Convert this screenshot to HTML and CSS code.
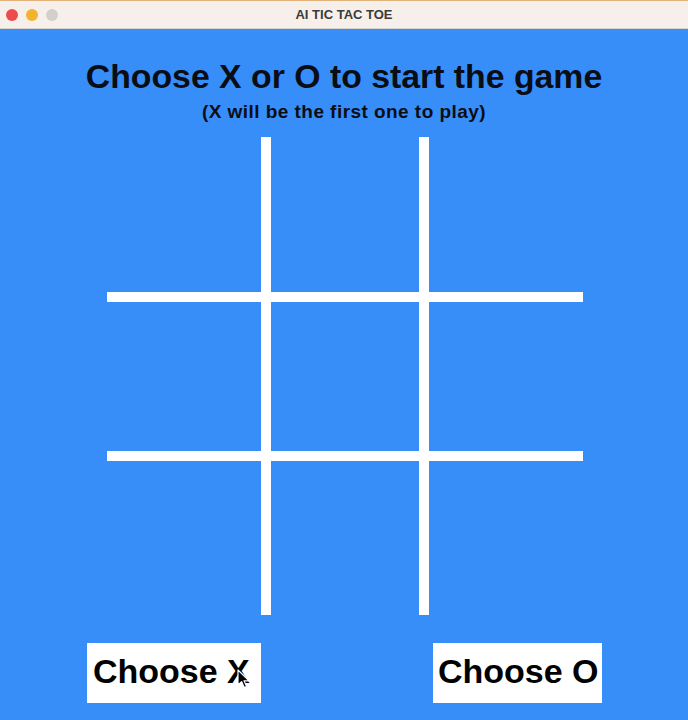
FILE: index.html
```html
<!DOCTYPE html>
<html>
<head>
<meta charset="utf-8">
<title>AI TIC TAC TOE</title>
<link rel="stylesheet" href="styles.css">
</head>
<body>
<div class="window">
  <div class="titlebar">
    <div class="lights">
      <span class="light red"></span>
      <span class="light yellow"></span>
      <span class="light gray"></span>
    </div>
    <div class="wintitle">AI TIC TAC TOE</div>
  </div>
  <main class="content">
    <h1 class="headline">Choose X or O to start the game</h1>
    <p class="subline">(X will be the first one to play)</p>
    <div class="board">
      <div class="cell"></div><div class="cell"></div><div class="cell"></div>
      <div class="cell"></div><div class="cell"></div><div class="cell"></div>
      <div class="cell"></div><div class="cell"></div><div class="cell"></div>
    </div>
    <div class="choices">
      <button class="choice choice-x">Choose X
        <svg class="cursor" width="14" height="20" viewBox="0 0 14 20">
          <path d="M1 1 L1 16 L4.6 12.6 L7.2 18.6 L9.6 17.6 L7 11.8 L12 11.8 Z" fill="#000" stroke="#fff" stroke-width="1.2" stroke-linejoin="round"/>
        </svg>
      </button>
      <button class="choice choice-o">Choose O</button>
    </div>
  </main>
</div>
</body>
</html>
```
FILE: styles.css
```css
* { box-sizing: border-box; }
html, body {
  margin: 0;
  padding: 0;
  width: 688px;
  height: 720px;
  overflow: hidden;
  background: #378ef9;
  font-family: "Liberation Sans", Arial, sans-serif;
}
.window {
  width: 688px;
  height: 720px;
  display: flex;
  flex-direction: column;
}
.titlebar {
  height: 29px;
  flex: 0 0 29px;
  background: #f7efea;
  border-top: 1px solid #e3b27a;
  border-bottom: 1px solid #d9d2cd;
  position: relative;
  display: flex;
  align-items: center;
  justify-content: center;
}
.lights {
  position: absolute;
  left: 6px;
  top: 8px;
  display: flex;
  gap: 8px;
}
.light {
  width: 12px;
  height: 12px;
  border-radius: 50%;
  display: block;
}
.red { background: #ee4b4d; }
.yellow { background: #f3b22f; }
.gray { background: #d3cfcc; }
.wintitle {
  font-size: 13px;
  font-weight: bold;
  color: #3c3a39;
}
.content {
  flex: 1;
  display: flex;
  flex-direction: column;
  align-items: center;
}
.headline {
  margin: 27px 0 0 0;
  font-size: 33.8px;
  line-height: 40px;
  font-weight: bold;
  color: #0a0d14;
}
.subline {
  margin: 5px 0 0 0;
  font-size: 19px;
  line-height: 22px;
  font-weight: bold;
  color: #0a0d14;
  letter-spacing: 0.45px;
}
.board {
  margin-top: 14px;
  margin-left: 2px;
  width: 476px;
  height: 478px;
  display: grid;
  grid-template-columns: 154px 148px 154px;
  grid-template-rows: 155px 149px 154px;
  gap: 10px;
  background: #ffffff;
}
.cell {
  background: #378ef9;
}
.choices {
  margin-top: 28px;
  width: 688px;
  padding: 0 86px 0 87px;
  display: flex;
  justify-content: space-between;
}
.choice {
  position: relative;
  height: 60px;
  border: none;
  background: #ffffff;
  font-family: "Liberation Sans", Arial, sans-serif;
  font-size: 34px;
  font-weight: bold;
  line-height: 56px;
  color: #000;
  text-align: left;
  padding: 0 0 4px 6px;
  margin: 0;
  white-space: nowrap;
}
.choice-x { width: 174px; }
.choice-o { width: 169px; padding-left: 5px; }
.cursor {
  position: absolute;
  left: 150px;
  top: 26px;
}
```
